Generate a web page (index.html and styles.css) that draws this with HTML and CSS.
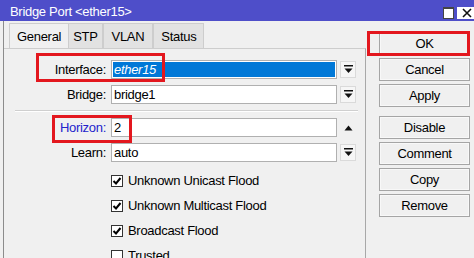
FILE: index.html
```html
<!DOCTYPE html>
<html lang="en">
<head>
    <meta charset="UTF-8">
    <meta name="viewport" content="width=device-width, initial-scale=1.0">
    <title>Bridge Port &lt;ether15&gt;</title>
    <link rel="stylesheet" href="styles.css">
</head>
<body>
    <div class="window">
        <div class="titlebar">
            <span class="title">Bridge Port &lt;ether15&gt;</span>
            <span class="tb-buttons">
                <span class="tb-btn tb-max"></span>
                <span class="tb-btn tb-close">
                    <svg width="10" height="10" viewBox="0 0 10 10"><path d="M1 1 L9 9 M9 1 L1 9" stroke="#111" stroke-width="1.6"/></svg>
                </span>
            </span>
        </div>

        <div class="main">
            <div class="pane">
                <div class="tabs">
                    <div class="tab active">General</div>
                    <div class="tab narrow">STP</div>
                    <div class="tab wide">VLAN</div>
                    <div class="tab">Status</div>
                </div>

                <div class="panel">
                    <div class="row">
                        <span class="lbl">Interface:</span>
                        <div class="field selected"><span>ether15</span></div>
                        <span class="drop">
                            <svg width="9" height="9" viewBox="0 0 9 9"><rect x="0" y="0" width="9" height="1.5" fill="#111"/><path d="M0.5 3.5 H8.5 L4.5 8 Z" fill="#111"/></svg>
                        </span>
                    </div>
                    <div class="row">
                        <span class="lbl">Bridge:</span>
                        <div class="field">bridge1</div>
                        <span class="drop">
                            <svg width="9" height="9" viewBox="0 0 9 9"><rect x="0" y="0" width="9" height="1.5" fill="#111"/><path d="M0.5 3.5 H8.5 L4.5 8 Z" fill="#111"/></svg>
                        </span>
                    </div>

                    <div class="sep"></div>

                    <div class="row">
                        <span class="lbl link">Horizon:</span>
                        <div class="field">2</div>
                        <span class="drop plain">
                            <svg width="9" height="6" viewBox="0 0 9 6"><path d="M0.5 5.5 H8.5 L4.5 0.5 Z" fill="#111"/></svg>
                        </span>
                    </div>
                    <div class="row">
                        <span class="lbl">Learn:</span>
                        <div class="field">auto</div>
                        <span class="drop">
                            <svg width="9" height="9" viewBox="0 0 9 9"><rect x="0" y="0" width="9" height="1.5" fill="#111"/><path d="M0.5 3.5 H8.5 L4.5 8 Z" fill="#111"/></svg>
                        </span>
                    </div>

                    <div class="checks">
                        <div class="check"><span class="box"><svg width="10" height="10" viewBox="0 0 10 10"><path d="M1.5 5 L4 7.5 L8.5 2" stroke="#000" stroke-width="2" fill="none"/></svg></span>Unknown Unicast Flood</div>
                        <div class="check"><span class="box"><svg width="10" height="10" viewBox="0 0 10 10"><path d="M1.5 5 L4 7.5 L8.5 2" stroke="#000" stroke-width="2" fill="none"/></svg></span>Unknown Multicast Flood</div>
                        <div class="check"><span class="box"><svg width="10" height="10" viewBox="0 0 10 10"><path d="M1.5 5 L4 7.5 L8.5 2" stroke="#000" stroke-width="2" fill="none"/></svg></span>Broadcast Flood</div>
                        <div class="check"><span class="box"></span>Trusted</div>
                    </div>
                </div>
            </div>

            <div class="actions">
                <button>OK</button>
                <button>Cancel</button>
                <button>Apply</button>
                <button class="gap">Disable</button>
                <button>Comment</button>
                <button>Copy</button>
                <button>Remove</button>
            </div>
        </div>

        <!-- red highlight boxes drawn over the dialog -->
        <div class="mark mark-interface"></div>
        <div class="mark mark-horizon"></div>
        <div class="mark mark-ok"></div>
    </div>
</body>
</html>
```

FILE: styles.css
```css
body {
    margin: 0;
    width: 474px;
    height: 258px;
    overflow: hidden;
    background: #f0f0f0;
    font-family: "Liberation Sans", Arial, sans-serif;
    font-size: 13px;
    letter-spacing: -0.3px;
    color: #000;
}
.window {
    position: relative;
    height: 258px;
}
.titlebar {
    height: 21px;
    background: #4e4ec9;
    color: #fff;
    display: flex;
    justify-content: space-between;
}
.title {
    padding: 3px 0 0 10px;
    line-height: 17px;
}
.tb-buttons {
    display: flex;
    gap: 3px;
    padding-top: 7px;
}
.tb-btn {
    height: 12px;
    background: #fff;
    box-sizing: border-box;
}
.tb-max {
    width: 11px;
    border: 1px solid #444;
    border-top-width: 2px;
}
.tb-close {
    width: 17px;
    display: flex;
    align-items: center;
    padding-left: 5px;
}
.main {
    display: flex;
    margin-left: 3px;
    border-left: 1px solid #8c8c8c;
    height: 237px;
}
.pane {
    width: 362px;
    padding-top: 2px;
}
.tabs {
    display: flex;
    height: 25px;
    margin-left: 5px;
}
.tab {
    padding: 0 7px;
    line-height: 25px;
    background: #e2e2e2;
    border: 1px solid #cdcdcd;
    border-bottom: none;
    box-sizing: border-box;
}
.tab.narrow {
    padding: 0 4px;
}
.tab.wide {
    padding: 0 8px;
}
.tab.active {
    background: #f0f0f0;
    border-right: none;
}
.panel {
    border-top: 1px solid #cdcdcd;
    border-right: 1px solid #a8a8a8;
    padding-top: 11px;
    height: 220px;
}
.row {
    display: flex;
    align-items: center;
    height: 19px;
    margin-bottom: 6px;
}
.lbl {
    width: 102px;
    text-align: right;
    margin-right: 5px;
}
.lbl.link {
    color: #2323cc;
}
.field {
    width: 226px;
    height: 19px;
    box-sizing: border-box;
    border: 1px solid #b0b0b0;
    background: #fff;
    padding-left: 2px;
    line-height: 17px;
}
.field.selected {
    background: #0078d7;
    color: #fff;
    font-style: italic;
    box-shadow: inset 0 0 0 1px #fff;
}
.drop {
    width: 16px;
    height: 17px;
    margin-left: 3px;
    display: flex;
    align-items: center;
    justify-content: center;
    background: #f6f6f6;
    border: 1px solid #dadada;
    box-sizing: border-box;
}
.drop.plain {
    background: none;
    border: none;
}
.sep {
    margin: 2px 7px 6px 11px;
    border-top: 1px solid #cfcfcf;
    border-bottom: 1px solid #fff;
}
.check {
    height: 25px;
    display: flex;
    align-items: center;
    padding-left: 107px;
}
.box {
    width: 12px;
    height: 12px;
    box-sizing: border-box;
    border: 1px solid #333;
    background: #fff;
    margin-right: 5px;
    display: flex;
    align-items: center;
    justify-content: center;
}
.actions {
    display: flex;
    flex-direction: column;
    gap: 3px;
    padding: 11px 0 0 13px;
}
.actions button {
    width: 91px;
    height: 23px;
    font: inherit;
    letter-spacing: inherit;
    color: #000;
    background: #f0f0f0;
    border: 1px solid #a5a5a5;
    box-shadow: inset 0 0 0 1px #f8f8f8;
    padding: 0;
}
.actions button.gap {
    margin-top: 6px;
}
.mark {
    position: absolute;
    border: 3px solid #e3171e;
    box-sizing: border-box;
}
.mark-interface {
    left: 36px;
    top: 53px;
    width: 129px;
    height: 29px;
}
.mark-horizon {
    left: 52px;
    top: 115px;
    width: 80px;
    height: 28px;
}
.mark-ok {
    left: 367px;
    top: 31px;
    width: 103px;
    height: 25px;
}
```
